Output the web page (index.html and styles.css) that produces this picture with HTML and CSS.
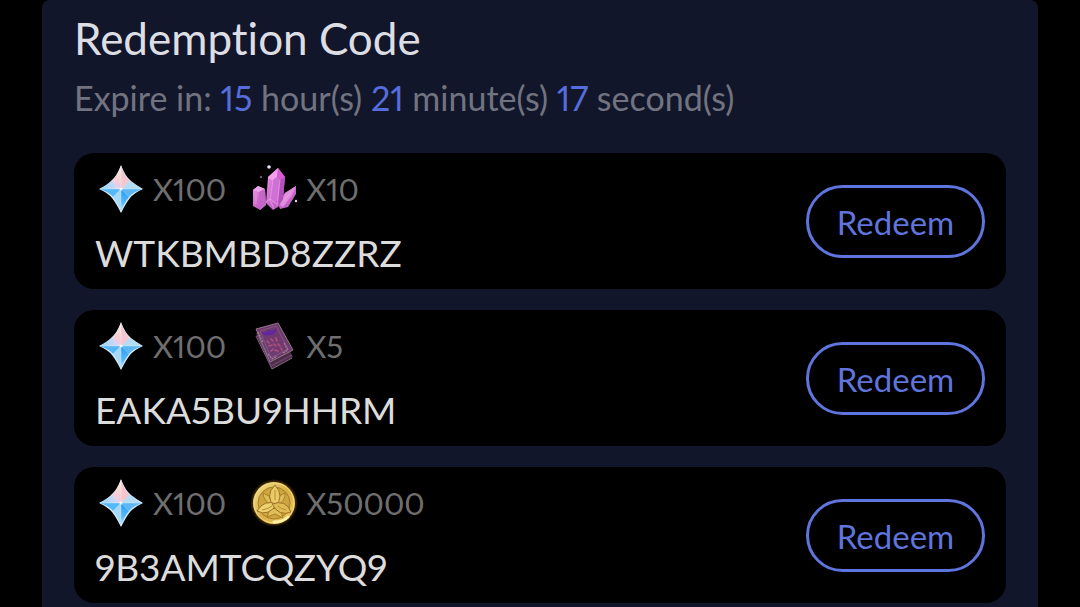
FILE: index.html
```html
<!DOCTYPE html>
<html lang="en">
<head>
<meta charset="utf-8">
<meta name="viewport" content="width=device-width, initial-scale=1">
<title>Redemption Code</title>
<link rel="stylesheet" href="styles.css">
</head>
<body>
<svg class="defs" width="0" height="0" aria-hidden="true">
  <defs>
    <linearGradient id="gem-tl" x1="0" y1="0" x2="0" y2="1"><stop offset="0" stop-color="#fff0dc"/><stop offset=".5" stop-color="#f8d3d4"/><stop offset="1" stop-color="#f1c3df"/></linearGradient>
    <linearGradient id="gem-l" x1="0" y1="0" x2="1" y2="0"><stop offset="0" stop-color="#8cd6ff"/><stop offset="1" stop-color="#e8d6f4"/></linearGradient>
    <linearGradient id="gem-b" x1="0" y1="0" x2="0" y2="1"><stop offset="0" stop-color="#299bf0"/><stop offset=".6" stop-color="#56b9f6"/><stop offset="1" stop-color="#c2f1ff"/></linearGradient>
    <symbol id="gem" viewBox="0 0 48 48">
      <path d="M24 0 Q28 11 34 16 Q39 20 46 24 Q37 28 33 33 Q29 38 24 48 Q19 38 15 33 Q11 28 2 24 Q10 20 14 16 Q20 11 24 0Z" fill="#d5ebfb"/>
      <path d="M24 1 Q20 12 15 16 L24 24Z" fill="url(#gem-tl)"/>
      <path d="M24 1 Q28 12 33 16 L24 24Z" fill="#f3c6d0"/>
      <path d="M3 24 Q11 20 15 16 L24 24Z" fill="url(#gem-l)"/>
      <path d="M45 24 Q38 20 33 16 L24 24Z" fill="#b4dcf4"/>
      <path d="M3 24 L24 24 L16 32 Q12 27 3 24Z" fill="#55b8f8"/>
      <path d="M45 24 L24 24 L32 32 Q36 27 45 24Z" fill="#5cb7f3"/>
      <path d="M24 24 L16 32 Q21 38 24 47Z" fill="#a5d8fa"/>
      <path d="M24 24 L32 32 Q27 38 24 47Z" fill="url(#gem-b)"/>
      <path d="M24 1V47M3 24H45" fill="none" stroke="#fff" stroke-opacity=".4" stroke-width=".7"/>
      <circle cx="24" cy="24" r="1.5" fill="#fff" opacity=".8"/>
    </symbol>
    <linearGradient id="ore" x1="0" y1="0" x2="1" y2="1"><stop offset="0" stop-color="#ee98ea"/><stop offset=".5" stop-color="#cf68cf"/><stop offset="1" stop-color="#b058b6"/></linearGradient>
    <linearGradient id="cover" x1="1" y1="0" x2="0" y2="1"><stop offset="0" stop-color="#6a3b6d"/><stop offset=".5" stop-color="#713a70"/><stop offset="1" stop-color="#67417e"/></linearGradient>
    <linearGradient id="gold" x1="0" y1="0" x2="1" y2="1"><stop offset="0" stop-color="#f6e391"/><stop offset=".5" stop-color="#d9b048"/><stop offset="1" stop-color="#ecc75c"/></linearGradient>
    <radialGradient id="glow"><stop offset=".8" stop-color="#b77a1e" stop-opacity=".6"/><stop offset="1" stop-color="#b77a1e" stop-opacity="0"/></radialGradient>
  </defs>
</svg>

<main class="panel">
  <header class="heading">
    <h1 class="title">Redemption Code</h1>
    <p class="expiry">Expire in: <span class="num">15</span> hour(s) <span class="num">21</span> minute(s) <span class="num">17</span> second(s)</p>
  </header>

  <ul class="codes">
    <li class="card">
      <div class="info">
        <div class="rewards">
          <span class="reward"><svg class="icon" aria-hidden="true"><use href="#gem"/></svg>X100</span>
          <span class="reward"><svg class="icon" viewBox="0 0 48 48" aria-hidden="true">
            <path d="M3 25 L8 21 L15 24 L16 40 L10 45 L3 41Z" fill="url(#ore)"/>
            <path d="M3 25 L9 27 L15 24 L8 21Z" fill="#eda4e8"/>
            <path d="M9 27 L10 45 L16 40 L15 24Z" fill="#c269c6"/>
            <path d="M35 28 L46 21 L46 29 L38 42 L30 44 L28 38Z" fill="url(#ore)"/>
            <path d="M35 28 L46 21 L42 30 L33 42 L29 39Z" fill="#e18edc"/>
            <path d="M18 12 L28 3 L35 12 L33 34 L28 42 L23 45 L16 38Z" fill="url(#ore)"/>
            <path d="M18 12 L28 3 L27 12 L23 15Z" fill="#f4a0ec"/>
            <path d="M28 3 L35 12 L30 15 L27 12Z" fill="#d95bd3"/>
            <path d="M23 15 L27 12 L30 15 L28 34 L24 39 L20 34Z" fill="#cf70d4"/>
            <path d="M30 15 L35 12 L33 34 L28 42Z" fill="#b450bc"/>
            <path d="M18 13 L23 15 L20 35 L24 44 M30 15 L27 41 M16 37 L20 34 L27 39 M34 36 L40 28 M6 28 L6 39" fill="none" stroke="#f5b5f0" stroke-width=".8" opacity=".65"/>
            <circle cx="19" cy="2" r="1.8" fill="#f0e2f8"/><circle cx="11" cy="12" r="1.2" fill="#715a7b"/><circle cx="46" cy="36" r="1.2" fill="#e7d5ee"/>
          </svg>X10</span>
        </div>
        <div class="code">WTKBMBD8ZZRZ</div>
      </div>
      <button class="redeem" type="button">Redeem</button>
    </li>

    <li class="card">
      <div class="info">
        <div class="rewards">
          <span class="reward"><svg class="icon" aria-hidden="true"><use href="#gem"/></svg>X100</span>
          <span class="reward"><svg class="icon" viewBox="0 0 48 48" aria-hidden="true">
            <path d="M6 11 L27 4 L43 35 L22 47Z" fill="#4b3045"/>
            <path d="M6 14 L22 47 L42 36" fill="none" stroke="#8c6983" stroke-width="1"/>
            <path d="M7 13 L21 44 L42 33" fill="none" stroke="#6d4275" stroke-width="1.4"/>
            <path d="M6 7 L28 1 L43 28 L20 40Z" fill="url(#cover)" stroke="#967588" stroke-width="1"/>
            <path d="M10 9 L26 4 L38 27 L21 36Z" fill="none" stroke="#82597a" stroke-width="1"/>
            <path d="M11 9 Q16 13 18 8 Q23 10 27 6 Q25 14 19 13 Q14 15 11 9Z" fill="#6226a0"/>
            <path d="M17 19l2 2M21 17l2 2M26 16l1 3M19 24l3-1M24 22l2 2M28 22l2 2M21 29l2-2M25 28l3 1M31 26l1 2" fill="none" stroke="#b0527a" stroke-width="1.6" stroke-linecap="round"/>
            <path d="M18 32 L22 37 L27 34 M34 21 L38 28 L33 31 M8 10 L13 21" fill="none" stroke="#a48399" stroke-width="1.2" stroke-dasharray="2 1"/>
          </svg>X5</span>
        </div>
        <div class="code">EAKA5BU9HHRM</div>
      </div>
      <button class="redeem" type="button">Redeem</button>
    </li>

    <li class="card">
      <div class="info">
        <div class="rewards">
          <span class="reward"><svg class="icon" aria-hidden="true"><use href="#gem"/></svg>X100</span>
          <span class="reward"><svg class="icon" viewBox="0 0 48 48" aria-hidden="true">
            <circle cx="24" cy="24" r="24" fill="url(#glow)"/>
            <circle cx="24" cy="24" r="21" fill="url(#gold)"/>
            <circle cx="24" cy="24" r="20" fill="none" stroke="#f3dc80" stroke-width="1"/>
            <circle cx="24" cy="24" r="16" fill="#cfa540" stroke="#a67c28" stroke-width="1"/>
            <path d="M23 27 Q13 22 13 14 L19 17 Z M26 27 Q36 22 35 14 L29 17 Z M20 30 L17 38 L25 35 L33 39 L30 29Z" fill="#dfbd58" stroke="#a37a28" stroke-width=".9"/>
            <path d="M25 28 Q14 17 25 6 Q35 17 25 28Z" fill="#e8cb66" stroke="#9b7326" stroke-width="1"/>
            <path d="M27 25 Q14 20 7 32 Q18 38 27 25Z" fill="#edd070" stroke="#9b7326" stroke-width="1"/>
            <path d="M22 25 Q36 20 41 33 Q29 38 22 25Z" fill="#dfbb54" stroke="#9b7326" stroke-width="1"/>
            <path d="M25 11 V21 M12 31 Q18 30 22 27 M36 31 Q31 30 28 27" fill="none" stroke="#b88c33" stroke-width="1"/>
            <path d="M24 43 Q33 43 38 38" fill="none" stroke="#fff2a6" stroke-width="3" stroke-linecap="round"/>
          </svg>X50000</span>
        </div>
        <div class="code">9B3AMTCQZYQ9</div>
      </div>
      <button class="redeem" type="button">Redeem</button>
    </li>
  </ul>
</main>
</body>
</html>
```
FILE: styles.css
```css
* {
  box-sizing: border-box;
}

body {
  margin: 0;
  background: #000;
  color: #dcdcdc;
  font-family: Lato, "Open Sans", sans-serif;
  font-variant-ligatures: none;
  font-variant-numeric: proportional-nums;
}

.defs {
  display: block;
}

.panel {
  min-height: 100vh;
  margin: 0 42px;
  padding: 10px 32px 4px;
  background: #12162a;
  border-radius: 8px 8px 0 0;
}

.heading {
  margin-bottom: 35px;
}

.title {
  margin: 0;
  font-size: 44px;
  font-weight: 400;
  line-height: 56px;
  color: #dddee3;
}

.expiry {
  margin: 12px 0 0;
  font-size: 34px;
  line-height: 40px;
  color: #717480;
}

.num {
  color: #566ddb;
}

.codes {
  display: flex;
  flex-direction: column;
  gap: 21px;
  margin: 0;
  padding: 0;
  list-style: none;
}

.card {
  display: flex;
  align-items: center;
  justify-content: space-between;
  height: 136px;
  padding: 0 21px;
  background: #000;
  border-radius: 20px;
}

.rewards {
  display: flex;
  gap: 24px;
  padding-left: 2px;
}

.reward {
  display: flex;
  align-items: center;
  gap: 8px;
  font-size: 31px;
  line-height: 48px;
  color: #6e6e6e;
}

.icon {
  width: 48px;
  height: 48px;
}

.code {
  margin-top: 16px;
  font-size: 37px;
  line-height: 48px;
}

.redeem {
  width: 179px;
  height: 73px;
  padding: 2px 0 0;
  border: 3px solid #5f74dc;
  border-radius: 37px;
  background: transparent;
  color: #5f74dc;
  font: inherit;
  font-size: 33px;
}
```
